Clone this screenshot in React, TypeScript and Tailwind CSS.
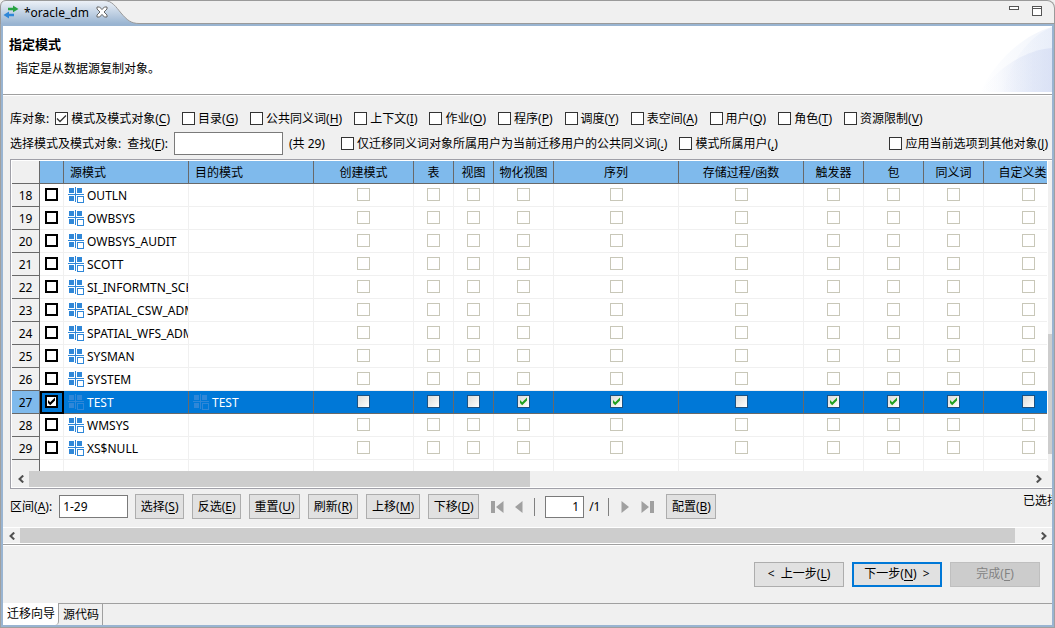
import { useState } from "react";
import type { ReactNode } from "react";

type Column = { title: string; width: string };

const objectColumns: Column[] = [
  { title: "创建模式", width: "w-[100px]" },
  { title: "表", width: "w-[40px]" },
  { title: "视图", width: "w-[40px]" },
  { title: "物化视图", width: "w-[60px]" },
  { title: "序列", width: "w-[125px]" },
  { title: "存储过程/函数", width: "w-[125px]" },
  { title: "触发器", width: "w-[60px]" },
  { title: "包", width: "w-[60px]" },
  { title: "同义词", width: "w-[60px]" },
  { title: "自定义类型", width: "w-[90px]" },
];

const schemas = [
  "OUTLN",
  "OWBSYS",
  "OWBSYS_AUDIT",
  "SCOTT",
  "SI_INFORMTN_SCHEMA",
  "SPATIAL_CSW_ADMIN_USR",
  "SPATIAL_WFS_ADMIN_USR",
  "SYSMAN",
  "SYSTEM",
  "TEST",
  "WMSYS",
  "XS$NULL",
];

const firstRow = 18;
const selectedSchema = "TEST";
const migrated = ["物化视图", "序列", "触发器", "包", "同义词"];

const libraryObjects = [
  { text: "模式及模式对象", hotkey: "C", on: true },
  { text: "目录", hotkey: "G" },
  { text: "公共同义词", hotkey: "H" },
  { text: "上下文", hotkey: "I" },
  { text: "作业", hotkey: "O" },
  { text: "程序", hotkey: "P" },
  { text: "调度", hotkey: "Y" },
  { text: "表空间", hotkey: "A" },
  { text: "用户", hotkey: "Q" },
  { text: "角色", hotkey: "T" },
  { text: "资源限制", hotkey: "V" },
];

function Hotkey({ text, letter }: { text: string; letter: string }) {
  return (
    <span className="whitespace-nowrap">
      {text}(<span className="underline underline-offset-2">{letter}</span>)
    </span>
  );
}

function CheckField({ text, hotkey, on = false }: { text: string; hotkey: string; on?: boolean }) {
  const [checked, setChecked] = useState(on);
  return (
    <label className="flex shrink-0 items-center gap-[3px]">
      <span className="grid size-[13px]">
        <input
          type="checkbox"
          checked={checked}
          onChange={() => setChecked(!checked)}
          className="col-start-1 row-start-1 size-[13px] appearance-none border border-[#333333] bg-white"
        />
        {checked && (
          <svg viewBox="0 0 13 13" className="pointer-events-none col-start-1 row-start-1 size-[13px]">
            <path d="M2 6.5 L5 9.5 L11 3.5" fill="none" stroke="#333" strokeWidth="1.3" />
          </svg>
        )}
      </span>
      <Hotkey text={text} letter={hotkey} />
    </label>
  );
}

type CellKind = "row" | "plain" | "selected";

const cellBox: Record<CellKind, string> = {
  row: "border-2 border-black bg-white",
  plain: "border border-[#c8c7b8] bg-white",
  selected: "border border-[#1c5180] bg-linear-to-br from-[#dcdcd7] to-white",
};

function CellCheck({ label, on, kind }: { label: string; on: boolean; kind: CellKind }) {
  const [checked, setChecked] = useState(on);
  return (
    <span className="mx-auto mb-[1px] grid size-[13px]">
      <input
        type="checkbox"
        aria-label={label}
        checked={checked}
        onChange={() => setChecked(!checked)}
        className={`col-start-1 row-start-1 size-[13px] appearance-none ${cellBox[kind]}`}
      />
      {checked && (
        <svg viewBox="0 0 13 13" className="pointer-events-none col-start-1 row-start-1 size-[13px]">
          <path
            d="M3 5 L5.2 7.2 L10 2.6 L10 5.6 L5.2 10.2 L3 8 Z"
            fill={kind === "row" ? "#000" : "#21a121"}
          />
        </svg>
      )}
    </span>
  );
}

function SchemaIcon({ dim = false }: { dim?: boolean }) {
  return (
    <svg viewBox="0 0 16 16" className="size-4 shrink-0" shapeRendering="crispEdges">
      <g fill="#2f87d8">
        <rect x="1" y="1" width="5" height="5" />
        <rect x="9" y="1" width="5" height="5" />
        <rect x="1" y="9" width="5" height="5" />
        <rect x="7" y="0" width="1" height="15" />
        <rect x="0" y="7" width="16" height="1" />
      </g>
      <rect x="9.5" y="9.5" width="6" height="6" fill={dim ? "none" : "#fff"} stroke="#2f87d8" />
    </svg>
  );
}

function SchemaName({ name, dim }: { name: string; dim: boolean }) {
  return (
    <div className="flex items-center gap-[3px] overflow-hidden">
      <SchemaIcon dim={dim} />
      <span className="pt-0.5">{name}</span>
    </div>
  );
}

function PushButton({ children, className = "" }: { children: ReactNode; className?: string }) {
  return (
    <button
      type="button"
      className={`flex h-[25px] items-center justify-center whitespace-nowrap border border-[#adadad] bg-[#e1e1e1] ${className}`}
    >
      {children}
    </button>
  );
}

function Chevron({ right = false }: { right?: boolean }) {
  return (
    <svg viewBox="0 0 6 8" className={`h-2 w-1.5 ${right ? "rotate-180" : ""}`}>
      <path d="M5.2 0.6 L1.6 4 L5.2 7.4" fill="none" stroke="#505050" strokeWidth="2.1" />
    </svg>
  );
}

function PageButton({ label, children }: { label: string; children: ReactNode }) {
  return (
    <button type="button" aria-label={label} className="flex h-5 items-center">
      {children}
    </button>
  );
}

function EditorTabs() {
  return (
    <div className="flex h-6 shrink-0 items-start justify-between">
      <div className="relative flex h-6 w-[145px] items-center gap-[2px] pl-[3px]">
        <svg viewBox="0 0 145 24" className="absolute inset-0 h-6 w-[145px]">
          <defs>
            <linearGradient id="tab" x1="0" y1="0" x2="0" y2="1">
              <stop offset="0" stopColor="#eef2f8" />
              <stop offset="1" stopColor="#99b4d1" />
            </linearGradient>
          </defs>
          <path
            d="M0 24 V6 Q1 0.5 6 0.5 H104 C112 0.5 116 7 121 13 C127 20 131 23.5 139 23.5 H145 V24 Z"
            fill="url(#tab)"
          />
          <path
            d="M0.5 24 V6 Q1 0.5 6 0.5 H104 C112 0.5 116 7 121 13 C127 20 131 23.5 139 23.5 H145 M104 0.5 H145"
            fill="none"
            stroke="#9a9a9a"
          />
        </svg>
        <svg viewBox="0 0 16 14" className="relative h-3.5 w-4">
          <path d="M5 2.8 H10 V0.5 L15.5 4 L10 7.2 V5.2 H5 Z" fill="#27a343" />
          <path d="M11 8.8 H6 V6.6 L0.5 10 L6 13.4 V11.2 H11 Z" fill="#2f87d8" />
        </svg>
        <span className="relative pt-0.5 pl-[3px]">*oracle_dm</span>
        <button type="button" aria-label="关闭" className="relative ml-[5px]">
          <svg viewBox="0 0 12 12" className="h-3 w-3">
            <path
              d="M1 1 H3.6 L6 3.6 L8.4 1 H11 V3 L8 6 L11 9 V11 H8.4 L6 8.4 L3.6 11 H1 V9 L4 6 L1 3 Z"
              fill="#fff"
              stroke="#666"
            />
          </svg>
        </button>
      </div>
      <div className="flex h-6 flex-1 items-start justify-end gap-[13px] rounded-tr-lg border-y border-r border-[#9a9a9a] pt-[5px] pr-3">
        <button type="button" aria-label="最小化" className="block h-1 w-2.5 border border-[#555] bg-white" />
        <button type="button" aria-label="最大化" className="grid h-2.5 w-2.5 border border-[#555] bg-white pt-px">
          <span className="h-px bg-[#555]" />
        </button>
      </div>
    </div>
  );
}

function Banner() {
  return (
    <header className="flex h-[69px] shrink-0 justify-between border-b border-[#a0a0a0] bg-white">
      <div className="flex flex-col gap-[7px] pt-[9px] pl-[6px]">
        <h1 className="text-[13px] leading-[18px] font-bold">指定模式</h1>
        <p className="pl-[7px] leading-[18px]">指定是从数据源复制对象。</p>
      </div>
      <svg viewBox="0 0 72 66" className="h-[66px] w-[72px]">
        <defs>
          <linearGradient id="swoosh" x1="0" y1="0" x2="1" y2="0">
            <stop offset="0" stopColor="#d6def4" stopOpacity="0" />
            <stop offset="0.25" stopColor="#d6def4" stopOpacity="0.08" />
            <stop offset="1" stopColor="#d6def4" stopOpacity="0.75" />
          </linearGradient>
          <linearGradient id="swooshFaint" x1="0" y1="0" x2="1" y2="0">
            <stop offset="0" stopColor="#dfe7f7" stopOpacity="0" />
            <stop offset="1" stopColor="#dfe7f7" stopOpacity="0.45" />
          </linearGradient>
        </defs>
        <path d="M0 66 C14 38 40 10 72 1 V66 Z" fill="url(#swooshFaint)" />
        <path d="M22 66 C30 40 45 12 72 1 V66 Z" fill="url(#swooshFaint)" />
        <path d="M0 66 C20 40 46 24 72 22 V66 Z" fill="url(#swoosh)" />
      </svg>
    </header>
  );
}

function SchemaTable() {
  return (
    <div className="flex">
      <div className="min-w-0 flex-1 overflow-hidden bg-white">
        <table className="w-[1062px] table-fixed border-separate border-spacing-0">
          <colgroup>
            <col className="w-[28px]" />
            <col className="w-[24px]" />
            <col className="w-[125px]" />
            <col className="w-[125px]" />
            {objectColumns.map((c) => (
              <col key={c.title} className={c.width} />
            ))}
          </colgroup>
          <thead>
            <tr className="h-[23px]">
              <th aria-label="行号" className="border-r border-b border-[#696969] bg-[#f0f0f0] p-0" />
              <th aria-label="选择" className="border-r border-b border-[#696969] bg-[#7fbaec] p-0" />
              <th className="border-r border-b border-[#696969] bg-[#7fbaec] p-0 pt-0.5 pl-[6px] text-left font-normal">源模式</th>
              <th className="border-r border-b border-[#696969] bg-[#7fbaec] p-0 pt-0.5 pl-[6px] text-left font-normal">目的模式</th>
              {objectColumns.map((c) => (
                <th
                  key={c.title}
                  className="border-r border-b border-[#696969] bg-[#7fbaec] p-0 pt-0.5 text-center font-normal whitespace-nowrap"
                >
                  {c.title}
                </th>
              ))}
            </tr>
          </thead>
          <tbody>
            {schemas.map((name, i) => {
              const selected = name === selectedSchema;
              const line = selected ? "border-[#696969] bg-[#0078d7] text-white" : "border-[#f0f0f0]";
              return (
                <tr key={name} className="h-[23px]">
                  <th
                    scope="row"
                    className={`border-r border-b border-[#696969] p-0 pt-0.5 text-center font-normal ${selected ? "bg-[#7fbaec]" : "bg-[#f0f0f0]"}`}
                  >
                    {firstRow + i}
                  </th>
                  <td className={`border-r border-b p-0 ${line} ${selected ? "outline-2 -outline-offset-2 outline-black" : ""}`}>
                    <CellCheck label={`选择 ${name}`} on={selected} kind="row" />
                  </td>
                  <td className={`border-r border-b p-0 pl-1 ${line}`}>
                    <SchemaName name={name} dim={selected} />
                  </td>
                  <td className={`border-r border-b p-0 pl-1 ${line}`}>
                    {selected && <SchemaName name={name} dim />}
                  </td>
                  {objectColumns.map((c) => (
                    <td key={c.title} className={`border-r border-b p-0 ${line}`}>
                      <CellCheck
                        label={`${name} ${c.title}`}
                        on={selected && migrated.includes(c.title)}
                        kind={selected ? "selected" : "plain"}
                      />
                    </td>
                  ))}
                </tr>
              );
            })}
            <tr className="h-[11px]">
              <td className="border-r border-[#696969] bg-[#f0f0f0] p-0" />
              <td className="border-r border-[#f0f0f0] p-0" />
              <td className="border-r border-[#f0f0f0] p-0" />
              <td className="border-r border-[#f0f0f0] p-0" />
              {objectColumns.map((c) => (
                <td key={c.title} className="border-r border-[#f0f0f0] p-0" />
              ))}
            </tr>
          </tbody>
        </table>
      </div>
      <div className="flex w-[5px] flex-col border-l border-white bg-[#f0f0f0] pt-[173px]">
        <div className="h-[120px] bg-[#cdcdcd]" />
      </div>
    </div>
  );
}

export default function App() {
  const [find, setFind] = useState("");
  const [range, setRange] = useState("1-29");
  const [page, setPage] = useState("1");

  return (
    <div className="flex min-h-screen flex-col overflow-hidden bg-[#f0f0f0] font-['Noto_Sans','Noto_Sans_CJK_SC',sans-serif] text-[12px] leading-4 text-black">
      <EditorTabs />
      <div className="flex flex-1 flex-col border-r border-b border-l border-[#a0a0a0]">
        <div className="flex flex-1 flex-col border-2 border-[#99b4d1]">
          <Banner />
          <section className="flex flex-col overflow-hidden border-t border-white">
            <div className="mt-[10px] flex h-[25px] items-center pl-[7px]">
              <span className="mr-[6px] shrink-0">库对象:</span>
              <div className="flex gap-3">
                {libraryObjects.map((o) => (
                  <CheckField key={o.hotkey} {...o} />
                ))}
              </div>
            </div>
            <div className="flex h-[25px] items-center pr-1 pl-[7px]">
              <span className="mr-[6px] shrink-0">选择模式及模式对象:</span>
              <label htmlFor="find" className="mr-[6px] shrink-0">
                <Hotkey text="查找" letter="F" />:
              </label>
              <input
                id="find"
                value={find}
                onChange={(e) => setFind(e.target.value)}
                className="mr-[6px] h-[23px] w-[109px] shrink-0 border border-[#7a7a7a] bg-white px-1"
              />
              <span className="mr-4 shrink-0">(共 29)</span>
              <div className="flex flex-1 gap-3">
                <CheckField text="仅迁移同义词对象所属用户为当前迁移用户的公共同义词" hotkey="." />
                <CheckField text="模式所属用户" hotkey="," />
              </div>
              <CheckField text="应用当前选项到其他对象" hotkey="J" />
            </div>
            <div className="mt-[3px] ml-[7px] border-y border-l border-[#a0a0a8]">
              <div className="border-y border-l border-white">
                <SchemaTable />
                <div className="flex h-4 items-center bg-[#f0f0f0]">
                  <div className="flex w-[17px] justify-center">
                    <Chevron />
                  </div>
                  <div className="flex h-full flex-1">
                    <div className="h-full w-1/2 bg-[#cdcdcd]" />
                  </div>
                  <div className="flex w-[22px] justify-start pl-[6px]">
                    <Chevron right />
                  </div>
                </div>
              </div>
            </div>
            <div className="flex h-[38px] items-center overflow-hidden pb-[3px] pl-[7px]">
              <label htmlFor="range" className="mr-[7px] shrink-0">
                <Hotkey text="区间" letter="A" />:
              </label>
              <input
                id="range"
                value={range}
                onChange={(e) => setRange(e.target.value)}
                className="mr-[7px] h-[23px] w-[69px] border border-[#7a7a7a] bg-white px-[3px]"
              />
              <div className="flex gap-2">
                <PushButton className="w-[49px]"><Hotkey text="选择" letter="S" /></PushButton>
                <PushButton className="w-[49px]"><Hotkey text="反选" letter="E" /></PushButton>
                <PushButton className="w-[51px]"><Hotkey text="重置" letter="U" /></PushButton>
                <PushButton className="w-[50px]"><Hotkey text="刷新" letter="R" /></PushButton>
                <PushButton className="w-[54px]"><Hotkey text="上移" letter="M" /></PushButton>
                <PushButton className="w-[51px]"><Hotkey text="下移" letter="D" /></PushButton>
              </div>
              <div className="ml-3 flex items-center gap-[11px]">
                <PageButton label="第一页">
                  <svg viewBox="0 0 13 12" className="h-3 w-[13px]" fill="#a0a0a0">
                    <path d="M0 0 H4 V12 H0 Z M12.5 0 V12 L5 6 Z" />
                  </svg>
                </PageButton>
                <PageButton label="上一页">
                  <svg viewBox="0 0 8 12" className="h-3 w-2" fill="#a0a0a0">
                    <path d="M7.5 0 V12 L0 6 Z" />
                  </svg>
                </PageButton>
                <div className="h-[18px] w-px bg-[#808080]" />
              </div>
              <input
                aria-label="页码"
                value={page}
                onChange={(e) => setPage(e.target.value)}
                className="mr-[5px] ml-[10px] h-[22px] w-[39px] border border-[#7a7a7a] bg-white px-1 text-right"
              />
              <span>/1</span>
              <div className="ml-2 flex items-center gap-[12px]">
                <div className="h-[18px] w-px bg-[#808080]" />
                <PageButton label="下一页">
                  <svg viewBox="0 0 8 12" className="h-3 w-2" fill="#a0a0a0">
                    <path d="M0.5 0 V12 L8 6 Z" />
                  </svg>
                </PageButton>
                <PageButton label="最后一页">
                  <svg viewBox="0 0 13 12" className="h-3 w-[13px]" fill="#a0a0a0">
                    <path d="M9 0 H13 V12 H9 Z M0.5 0 V12 L8 6 Z" />
                  </svg>
                </PageButton>
                <PushButton className="w-[50px]"><Hotkey text="配置" letter="B" /></PushButton>
              </div>
              <div className="ml-auto w-[29px] self-start overflow-hidden pt-1 whitespace-nowrap">已选择</div>
            </div>
            <div className="flex h-[17px] shrink-0 items-center border-y border-white bg-[#f0f0f0]">
              <div className="flex w-[17px] justify-center">
                <Chevron />
              </div>
              <div className="h-full flex-1 bg-[#cdcdcd]" />
              <div className="flex w-[37px] justify-end pr-[5px]">
                <Chevron right />
              </div>
            </div>
          </section>
          <div className="flex min-h-[59px] flex-1 items-center justify-end gap-2 border-t border-[#a0a0a0] pr-3 shadow-[inset_0_1px_0_white]">
            <PushButton className="w-[90px]">
              <span className="whitespace-pre">{"<  "}<Hotkey text="上一步" letter="L" /></span>
            </PushButton>
            <button
              type="button"
              className="flex h-[25px] w-[90px] items-center justify-center border-2 border-[#0078d7] bg-[#e1e1e1]"
            >
              <span className="whitespace-pre"><Hotkey text="下一步" letter="N" />{"  >"}</span>
            </button>
            <button
              type="button"
              disabled
              className="flex h-[25px] w-[90px] items-center justify-center border border-[#bfbfbf] bg-[#cccccc] text-[#838383]"
            >
              <Hotkey text="完成" letter="F" />
            </button>
          </div>
          <nav className="flex h-[22px] shrink-0 border-t border-[#a0a0a0]">
            <a href="#wizard" className="-mt-px flex items-center rounded-br border-r border-[#a0a0a0] bg-white pr-[3px] pl-1">
              迁移向导
            </a>
            <a href="#source" className="flex items-center border-r border-[#a0a0a0] pr-[3px] pl-1">
              源代码
            </a>
          </nav>
        </div>
      </div>
    </div>
  );
}
